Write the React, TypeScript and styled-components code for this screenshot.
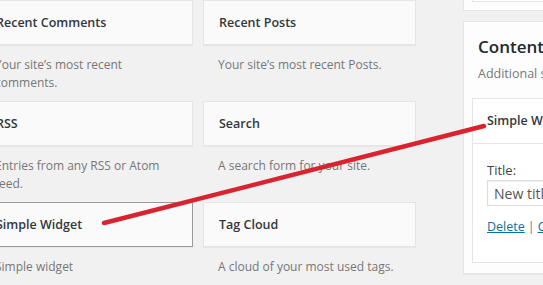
import React from "react";
import styled, { createGlobalStyle } from "styled-components";

const widgets = [
  { title: "Recent Comments", desc: "Your site’s most recent comments." },
  { title: "Recent Posts", desc: "Your site’s most recent Posts." },
  { title: "RSS", desc: "Entries from any RSS or Atom feed." },
  { title: "Search", desc: "A search form for your site." },
  { title: "Simple Widget", desc: "Simple widget", active: true },
  { title: "Tag Cloud", desc: "A cloud of your most used tags." },
];

export default function App() {
  return (
    <>
      <GlobalStyle />
      <Page>
        <WidgetList>
          {widgets.map((w) => (
            <WidgetItem key={w.title}>
              <WidgetCard $active={!!w.active}>{w.title}</WidgetCard>
              <WidgetDesc>{w.desc}</WidgetDesc>
            </WidgetItem>
          ))}
        </WidgetList>

        <Sidebars>
          <PrevSidebar>
            <PrevWidget />
          </PrevSidebar>
          <Sidebar>
            <SidebarName>Content Sidebar</SidebarName>
            <SidebarDesc>Additional sidebar that appears on the right.</SidebarDesc>
            <Widget>
              <WidgetTop>Simple Widget</WidgetTop>
              <WidgetInside>
                <Label>Title:</Label>
                <TitleInput defaultValue="New title" />
                <Actions>
                  <ActionLink href="#">Delete</ActionLink>
                  <Sep>|</Sep>
                  <ActionLink href="#">Close</ActionLink>
                </Actions>
              </WidgetInside>
            </Widget>
          </Sidebar>
        </Sidebars>

        <Annotation width="543" height="285" viewBox="0 0 543 285">
          <line
            x1="104"
            y1="223"
            x2="484"
            y2="126"
            stroke="#d9232e"
            strokeWidth="4.5"
            strokeLinecap="round"
          />
        </Annotation>
      </Page>
    </>
  );
}

const GlobalStyle = createGlobalStyle`
  html, body {
    margin: 0;
    padding: 0;
    background: #f1f1f1;
    overflow: hidden;
  }
  body {
    font-family: "Open Sans", "Liberation Sans", sans-serif;
    color: #444;
  }
`;

const Page = styled.div`
  position: relative;
  width: 543px;
  height: 285px;
  overflow: hidden;
  display: flex;
  align-items: flex-start;
`;

const WidgetList = styled.div`
  flex-shrink: 0;
  display: grid;
  grid-template-columns: 213px 213px;
  column-gap: 10px;
  margin-left: -20px;
`;

const WidgetItem = styled.div`
  display: flex;
  flex-direction: column;
`;

const WidgetCard = styled.div<{ $active: boolean }>`
  padding: 15px;
  font-size: 12.5px;
  font-weight: 600;
  line-height: 13px;
  color: #32373c;
  background: #fafafa;
  border: 1px solid ${(p) => (p.$active ? "#9a9a9a" : "#e5e5e5")};
  box-shadow: 0 1px 1px rgba(0, 0, 0, 0.04);
`;

const WidgetDesc = styled.div`
  padding: 11px 15px 9px;
  min-height: 36px;
  font-size: 12px;
  line-height: 18px;
  color: #777;
`;

const Sidebars = styled.div`
  flex-shrink: 0;
  width: 380px;
  margin-left: 47px;
  display: flex;
  flex-direction: column;
  gap: 10px;
`;

const PrevSidebar = styled.div`
  height: 10px;
  padding: 0 8px;
  background: #fdfdfd;
  border: 1px solid #e5e5e5;
  border-top: 0;
`;

const PrevWidget = styled.div`
  height: 1px;
  background: #fff;
  border: 1px solid #e5e5e5;
  border-top: 0;
`;

const Sidebar = styled.div`
  padding: 0 8px 10px;
  background: #fdfdfd;
  border: 1px solid #e5e5e5;
  box-shadow: 0 1px 1px rgba(0, 0, 0, 0.04);
`;

const SidebarName = styled.h3`
  margin: 0;
  padding: 15px 6px 8px;
  font-size: 17px;
  font-weight: 600;
  line-height: 20px;
  color: #23282d;
`;

const SidebarDesc = styled.p`
  margin: 0 0 15px;
  padding: 0 6px;
  font-size: 12.5px;
  line-height: 18px;
  color: #777;
  white-space: nowrap;
`;

const Widget = styled.div`
  background: #fff;
  border: 1px solid #e5e5e5;
`;

const WidgetTop = styled.div`
  padding: 14px 14px;
  font-size: 12.5px;
  font-weight: 600;
  line-height: 16px;
  color: #32373c;
  background: #fff;
  border-bottom: 1px solid #e5e5e5;
`;

const WidgetInside = styled.div`
  padding: 17px 14px 26px;
  display: flex;
  flex-direction: column;
`;

const Label = styled.label`
  font-size: 13px;
  line-height: 18px;
  color: #444;
`;

const TitleInput = styled.input`
  box-sizing: border-box;
  width: 100%;
  height: 26px;
  margin-top: 1px;
  padding: 0 6px;
  font-family: "Open Sans", "Liberation Sans", sans-serif;
  font-size: 14px;
  color: #555;
  background: #fff;
  border: 1px solid #ddd;
  box-shadow: inset 0 1px 2px rgba(0, 0, 0, 0.07);
  outline: none;
`;

const Actions = styled.div`
  margin-top: 12px;
  font-size: 12.5px;
  line-height: 18px;
`;

const ActionLink = styled.a`
  color: #0073aa;
  text-decoration: underline;
`;

const Sep = styled.span`
  margin: 0 3px;
  color: #777;
`;

const Annotation = styled.svg`
  position: absolute;
  left: 0;
  top: 0;
  pointer-events: none;
`;
